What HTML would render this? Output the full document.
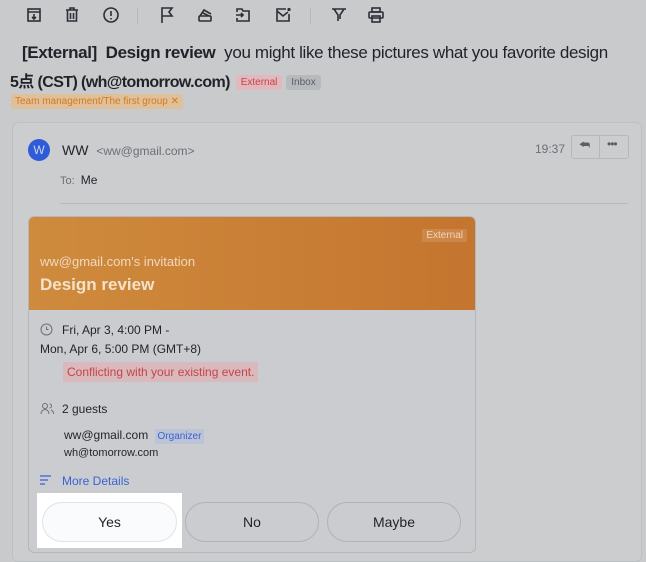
<!DOCTYPE html>
<html><head><meta charset="utf-8"><style>
*{margin:0;padding:0;box-sizing:border-box}
body{width:646px;height:558px;background:#c8cacc;font-family:"Liberation Sans","Noto Sans CJK SC",sans-serif;color:#1f2329;position:relative;overflow:hidden}
.a{position:absolute}
svg.i{position:absolute;top:6px;width:18px;height:18px;fill:none;stroke:#2b2f36;stroke-width:1.6}
.sep{position:absolute;top:8px;width:1px;height:16px;background:#b5b8bb}
.tag{display:inline-block;font-size:10px;padding:2px 5px;border-radius:3px;vertical-align:middle;letter-spacing:0}
.btn{position:absolute;top:502px;height:40px;border:1px solid #b0b3b6;border-radius:20px;text-align:center;line-height:38px;font-size:14px;color:#1f2329}
</style></head><body>
<svg class="i" style="left:25px" viewBox="0 0 18 18"><rect x="3" y="3" width="12" height="12"/><path d="M3 6h12M9 8v5M7 11l2 2 2-2"/></svg>
<svg class="i" style="left:63px" viewBox="0 0 18 18"><path d="M3 4h12M7 4V2h4v2M4.5 4v11h9V4M7.5 7v6M10.5 7v6"/></svg>
<svg class="i" style="left:102px" viewBox="0 0 18 18"><circle cx="9" cy="9" r="7"/><path d="M9 5v5M9 12v1.5"/></svg>
<div class="sep" style="left:137px"></div>
<svg class="i" style="left:158px" viewBox="0 0 18 18"><path d="M4 17V2h10l-3 4 3 4H4"/></svg>
<svg class="i" style="left:196px" viewBox="0 0 18 18"><rect x="3" y="10" width="12" height="5" rx="1"/><path d="M4 10l4-6 7 4M7 7l6 3"/></svg>
<svg class="i" style="left:234px" viewBox="0 0 18 18"><path d="M3 6V3h5l1 2h6v10H3v-3M2 9h7M7 7l2 2-2 2"/></svg>
<svg class="i" style="left:274px" viewBox="0 0 18 18"><path d="M15 8v7H3V3h9M3 5l6 5 5-4"/><circle cx="15" cy="3.5" r=".8" fill="#2b2f36"/></svg>
<div class="sep" style="left:310px"></div>
<svg class="i" style="left:330px" viewBox="0 0 18 18"><path d="M2 3h14M4 3l4 6v6M14 3l-4 6v4"/></svg>
<svg class="i" style="left:367px" viewBox="0 0 18 18"><rect x="5" y="2" width="8" height="4"/><rect x="2" y="6" width="14" height="6" rx="1"/><rect x="5" y="10" width="8" height="6"/></svg>

<div class="a" style="left:22px;top:43px;font-size:17px;font-weight:bold;white-space:nowrap;letter-spacing:-0.35px">[External]&nbsp; Design review <span style="font-weight:normal">&nbsp;you might like these pictures what you favorite design</span></div>
<div class="a" style="left:10px;top:68px;font-size:16px;font-weight:bold;white-space:nowrap;letter-spacing:-0.6px">5点 (CST) (wh@tomorrow.com) <span class="tag" style="background:#e1b9bc;color:#c9404a;font-weight:normal;margin-left:2px">External</span> <span class="tag" style="background:#b7babd;color:#5a5f66;font-weight:normal">Inbox</span></div>
<div class="a" style="left:11px;top:94px;font-size:10px;background:#dfc09a;color:#d67a1c;padding:2px 4px;border-radius:3px">Team management/The first group ✕</div>

<div class="a" style="left:12px;top:122px;width:630px;height:440px;border:1px solid #bdc0c3;border-radius:6px;background:#cbcdcf"></div>
<div class="a" style="left:28px;top:139px;width:22px;height:22px;border-radius:50%;background:#2f5bd6;color:#c9d4f4;font-size:12px;text-align:center;line-height:22px">W</div>
<div class="a" style="left:62px;top:142px;font-size:14px">WW <span style="font-size:12px;color:#6b7077;margin-left:4px">&lt;ww@gmail.com&gt;</span></div>
<div class="a" style="left:535px;top:142px;font-size:12px;color:#6b7077">19:37</div>
<div class="a" style="left:571px;top:135px;width:58px;height:24px;border:1px solid #b5b8bb;border-radius:3px"></div>
<div class="a" style="left:599px;top:135px;width:1px;height:24px;background:#b5b8bb"></div>
<div class="a" style="left:579px;top:138px;font-size:12px;color:#5a5f66">⮪</div>
<div class="a" style="left:607px;top:137px;font-size:12px;color:#5a5f66;letter-spacing:-1px">•••</div>
<div class="a" style="left:60px;top:173px;font-size:11px;color:#6b7077">To:&nbsp; <span style="color:#1f2329;font-size:12px">Me</span></div>
<div class="a" style="left:60px;top:203px;width:568px;height:1px;background:#b5b8bb"></div>

<div class="a" style="left:28px;top:216px;width:448px;height:337px;border:1px solid #b5b8bb;border-radius:6px;background:#cacccf;overflow:hidden">
 <div style="height:93px;background:linear-gradient(90deg,#cf8b3d,#c4752f);position:relative">
  <div class="a" style="right:8px;top:12px;font-size:10px;color:#f1d6b7;background:rgba(255,255,255,.12);padding:1px 4px">External</div>
  <div class="a" style="left:11px;top:37px;font-size:13px;color:#f0d8bd">ww@gmail.com's invitation</div>
  <div class="a" style="left:11px;top:58px;font-size:17px;font-weight:bold;color:#f5e2cc">Design review</div>
 </div>
</div>
<svg class="a" style="left:40px;top:323px" width="13" height="13" viewBox="0 0 13 13" fill="none" stroke="#6b7077"><circle cx="6.5" cy="6.5" r="5.5"/><path d="M6.5 3.5v3h2"/></svg>
<div class="a" style="left:62px;top:323px;font-size:12px">Fri, Apr 3, 4:00 PM -</div>
<div class="a" style="left:40px;top:342px;font-size:12px">Mon, Apr 6, 5:00 PM (GMT+8)</div>
<div class="a" style="left:63px;top:362px;font-size:12px;color:#c4454c;background:#d9b9bb;padding:3px 4px">Conflicting with your existing event.</div>
<svg class="a" style="left:40px;top:402px" width="14" height="13" viewBox="0 0 14 13" fill="none" stroke="#6b7077"><circle cx="5" cy="4" r="2.5"/><path d="M1 12c0-3 2-4.5 4-4.5s4 1.5 4 4.5M9.5 2a2 2 0 010 4M11 8c1.5.5 2.5 2 2.5 4"/></svg>
<div class="a" style="left:62px;top:402px;font-size:12px">2 guests</div>
<div class="a" style="left:64px;top:428px;font-size:12px">ww@gmail.com <span style="font-size:10px;color:#3a63d3;background:#bcc3d6;padding:2px 3px;margin-left:3px">Organizer</span></div>
<div class="a" style="left:64px;top:447px;font-size:11px">wh@tomorrow.com</div>
<svg class="a" style="left:40px;top:475px" width="12" height="10" viewBox="0 0 12 10" stroke="#3a63d3" stroke-width="1.3"><path d="M0 1h11M0 5h8M0 9h5"/></svg>
<div class="a" style="left:62px;top:474px;font-size:12px;color:#3a63d3">More Details</div>
<div class="a" style="left:37px;top:493px;width:145px;height:55px;background:#fff"></div>
<div class="btn" style="left:42px;width:135px;background:#fafbfc;border-color:#e1e3e6">Yes</div>
<div class="btn" style="left:185px;width:134px">No</div>
<div class="btn" style="left:327px;width:134px">Maybe</div>
</body></html>
